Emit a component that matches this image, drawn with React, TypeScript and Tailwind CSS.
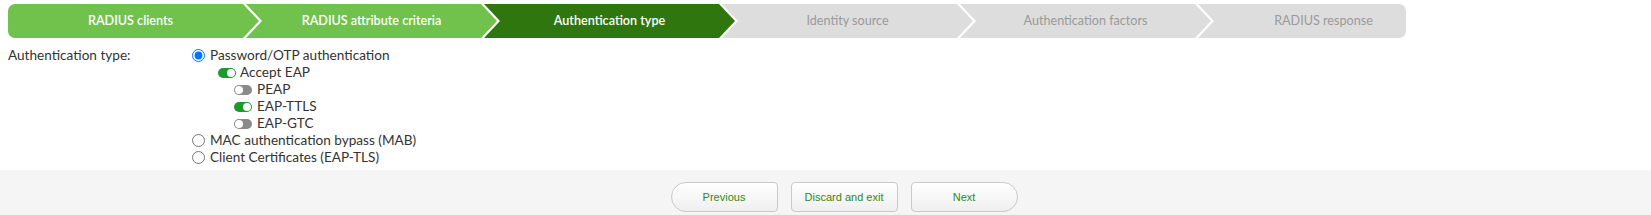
const steps = [
  { label: 'RADIUS clients', state: 'done' },
  { label: 'RADIUS attribute criteria', state: 'done' },
  { label: 'Authentication type', state: 'current' },
  { label: 'Identity source', state: 'todo' },
  { label: 'Authentication factors', state: 'todo' },
  { label: 'RADIUS response', state: 'todo' },
];

const stepColor: Record<string, string> = {
  done: 'bg-[#70c24c] text-white font-semibold',
  current: 'bg-[#2f760f] text-white font-semibold',
  todo: 'bg-[#dddddd] text-[#9a9a9a]',
};

const Toggle = ({ on }: { on: boolean }) => (
  <span
    className={`inline-flex h-[10px] w-[18px] shrink-0 items-center rounded-full px-[1px] ${
      on ? 'justify-end bg-[#1e9a2c]' : 'justify-start bg-[#8a8a8a]'
    }`}
  >
    <span className="h-[8px] w-[8px] rounded-full bg-white" />
  </span>
);

// steps overlap by 13px so the chevrons leave a thin white line between them
const Wizard = () => (
  <div className="ml-2 mt-1 flex h-[34px] w-[1398px] overflow-hidden rounded-[7px] font-['Lato',sans-serif] text-[12.6px]">
    {steps.map((step, i) => {
      const shape =
        i === 0
          ? 'pl-[10px] pr-[16px] [clip-path:polygon(0_0,235px_0,251px_50%,235px_100%,0_100%)]'
          : '-ml-[13px] px-[16px] [clip-path:polygon(0_0,235px_0,251px_50%,235px_100%,0_100%,16px_50%)]';
      return (
        <div
          key={step.label}
          className={`flex w-[251px] shrink-0 items-center justify-center ${shape} ${stepColor[step.state]}`}
        >
          {step.label}
        </div>
      );
    })}
  </div>
);

export default function App() {
  return (
    <div className="w-[1651px] bg-white">
      <Wizard />
      <div className="flex h-[132px] pt-[9px] font-['Lato',sans-serif] text-[13.6px] leading-[17px] text-[#333333]">
        <div className="w-[192px] shrink-0 pl-2">Authentication type:</div>
        <div className="flex flex-col">
          <label className="flex items-center gap-[5px]">
            <input type="radio" name="auth" defaultChecked className="m-0 h-[13px] w-[13px]" />
            Password/OTP authentication
          </label>
          <div className="flex flex-col pl-[26px]">
            <div className="flex items-center gap-[4px]">
              <Toggle on />
              Accept EAP
            </div>
            <div className="flex flex-col pl-[16px]">
              <div className="flex items-center gap-[5px]">
                <Toggle on={false} />
                PEAP
              </div>
              <div className="flex items-center gap-[5px]">
                <Toggle on />
                EAP-TTLS
              </div>
              <div className="flex items-center gap-[5px]">
                <Toggle on={false} />
                EAP-GTC
              </div>
            </div>
          </div>
          <label className="flex items-center gap-[5px]">
            <input type="radio" name="auth" className="m-0 h-[13px] w-[13px]" />
            MAC authentication bypass (MAB)
          </label>
          <label className="flex items-center gap-[5px]">
            <input type="radio" name="auth" className="m-0 h-[13px] w-[13px]" />
            Client Certificates (EAP-TLS)
          </label>
        </div>
      </div>
      <div className="flex h-[45px] justify-center gap-[13px] bg-[#f5f5f5] pl-[37px] pt-[12px] font-['Liberation_Sans',Arial,sans-serif] text-[11px] text-[#2f8a14]">
        <button className="h-[30px] w-[107px] rounded-l-[15px] rounded-r-[4px] border border-[#c9c9c9] bg-gradient-to-b from-white to-[#efefef]">
          Previous
        </button>
        <button className="h-[30px] w-[107px] rounded-[4px] border border-[#c9c9c9] bg-gradient-to-b from-white to-[#efefef]">
          Discard and exit
        </button>
        <button className="h-[30px] w-[107px] rounded-l-[4px] rounded-r-[15px] border border-[#c9c9c9] bg-gradient-to-b from-white to-[#efefef]">
          Next
        </button>
      </div>
    </div>
  );
}
